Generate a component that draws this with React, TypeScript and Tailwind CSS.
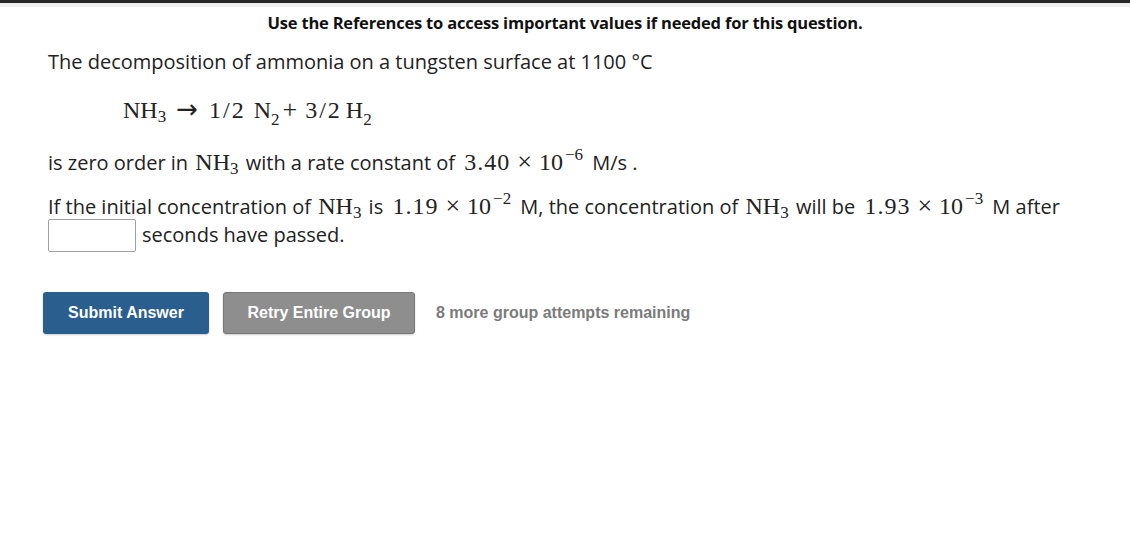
import React from "react";

const serif = { fontFamily: '"Liberation Serif", serif' };

const Sub = ({ children, low = false }: { children: React.ReactNode; low?: boolean }) => (
  <span className={"relative leading-none text-[17px] " + (low ? "top-[7px]" : "top-[4px]")}>{children}</span>
);

const Sup = ({ children }: { children: React.ReactNode }) => (
  <span className="relative leading-none top-[-10px] text-[17px] ml-[2px]">{children}</span>
);

const NH3 = () => (
  <span className="text-[24px] leading-none px-[2px]" style={serif}>
    NH<Sub>3</Sub>
  </span>
);

const Num = ({ m, e }: { m: string; e: string }) => (
  <span className="text-[24px] leading-none px-[4px]" style={serif}>
    <span className="tracking-[1px]">{m}</span>
    <span className="mx-[7px] text-[26px]">×</span>
    10<Sup>{e}</Sup>
  </span>
);

export default function App() {
  return (
    <div className="w-[1130px] h-[546px] bg-white overflow-hidden" style={{ fontFamily: '"Open Sans", sans-serif' }}>
      <div className="h-[3px] bg-[#262626]" />
      <div className="h-[4px] bg-[#efefef]" />
      <div className="text-center font-bold text-[16.5px] text-[#111] mt-[6px] leading-[20px] tracking-[-0.2px]">
        Use the References to access important values if needed for this question.
      </div>
      <div className="pl-[48px] text-[#222]">
        <div className="mt-[16px] h-[26px] text-[20px] leading-[26px]">
          The decomposition of ammonia on a tungsten surface at 1100 °C
        </div>
        <div className="mt-[20px] h-[30px] pl-[75px] text-[24px] leading-[30px] whitespace-nowrap" style={serif}>
          NH<Sub>3</Sub>
          <span className="ml-[10px] text-[26px] leading-none" style={{ fontFamily: '"DejaVu Sans", sans-serif' }}>→</span>
          <span className="ml-[11px] tracking-[2px]">1/2</span>
          <span className="ml-[8px]">N</span><Sub low>2</Sub>
          <span className="ml-[3px] text-[26px] leading-none">+</span>
          <span className="ml-[8px] tracking-[2px]">3/2</span>
          <span className="ml-[4px]">H</span><Sub low>2</Sub>
        </div>
        <div className="mt-[23px] h-[30px] text-[20px] leading-[30px] whitespace-nowrap">
          is zero order in <NH3 /> with a rate constant of <Num m="3.40" e="−6" /> M/s .
        </div>
        <div className="mt-[14px] h-[30px] text-[20px] leading-[30px] whitespace-nowrap">
          If the initial concentration of <NH3 /> is <Num m="1.19" e="−2" /> M, the concentration of <NH3 /> will be <Num m="1.93" e="−3" /> M after
        </div>
        <div className="flex items-center h-[32px] text-[20px] leading-[28px] mt-[-3px]">
          <div className="w-[88px] h-[33px] shrink-0 border border-[#a0a0a0] rounded-[2px] mr-[6px]" />
          <span>seconds have passed.</span>
        </div>
      </div>
      <div className="flex items-center pl-[43px] mt-[41px]" style={{ fontFamily: '"Liberation Sans", sans-serif' }}>
        <button className="w-[166px] h-[42px] bg-[#2a5e8f] text-white font-bold text-[16px] rounded-[3px] shadow-[0_1px_2px_rgba(0,0,0,0.2)]">
          Submit Answer
        </button>
        <button className="ml-[14px] w-[192px] h-[42px] bg-[#8e8e8e] border border-[#777] text-white font-bold text-[16px] rounded-[3px] shadow-[0_1px_2px_rgba(0,0,0,0.2)]">
          Retry Entire Group
        </button>
        <span className="ml-[21px] text-[#7b7b7b] font-bold text-[16px]">8 more group attempts remaining</span>
      </div>
    </div>
  );
}
